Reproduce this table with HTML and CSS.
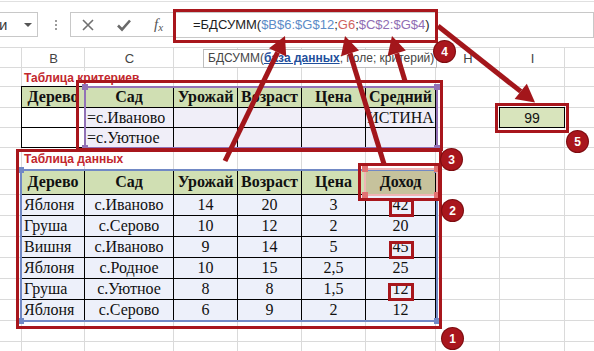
FILE: index.html
```html
<!DOCTYPE html>
<html lang="ru">
<head>
<meta charset="utf-8">
<title>БДСУММ</title>
<link rel="stylesheet" href="styles.css">
</head>
<body>
<div class="page">
  <div class="toolbar">
    <div class="namebox"><span class="nb-text">и</span><span class="caret"></span></div>
    <div class="dots"><i></i><i></i><i></i></div>
    <div class="fnbox">
      <svg class="ic-x" width="14" height="14" viewBox="0 0 14 14"><path d="M2 2L12 12M12 2L2 12" stroke="#707070" stroke-width="1.6" fill="none"/></svg>
      <svg class="ic-ok" width="16" height="14" viewBox="0 0 16 14"><path d="M2 7.5L6 11.5L14 2.5" stroke="#6a6a6a" stroke-width="2.6" fill="none"/></svg>
      <span class="fx">f<span class="fx-sub">x</span></span>
    </div>
    <div class="formula">=БДСУММ(<span class="r-blue">$B$6:$G$12</span>;<span class="r-red">G6</span>;<span class="r-purple">$C$2:$G$4</span>)</div>
  </div>

  <div class="sheet">
    <div class="ch"></div>
    <div class="ch">B</div>
    <div class="ch">C</div>
    <div class="ch"></div>
    <div class="ch"></div>
    <div class="ch"></div>
    <div class="ch"></div>
    <div class="ch">H</div>
    <div class="ch">I</div>
    <div class="ch"></div>

    <div class="lbl lbl-crit"><span>Таблица критериев</span></div>

    <div class="tbl crit">
      <div class="c h">Дерево</div>
      <div class="c h">Сад</div>
      <div class="c h">Урожай</div>
      <div class="c h">Возраст</div>
      <div class="c h">Цена</div>
      <div class="c h">Средний</div>

      <div class="c"></div>
      <div class="c l lav">=с.Иваново</div>
      <div class="c lav"></div>
      <div class="c lav"></div>
      <div class="c lav"></div>
      <div class="c lav">ИСТИНА</div>

      <div class="c"></div>
      <div class="c l lav">=с.Уютное</div>
      <div class="c lav"></div>
      <div class="c lav"></div>
      <div class="c lav"></div>
      <div class="c lav"></div>
    </div>

    <div class="result">99</div>

    <div class="lbl lbl-data"><span>Таблица данных</span></div>

    <div class="tbl data">
      <div class="c h">Дерево</div>
      <div class="c h">Сад</div>
      <div class="c h">Урожай</div>
      <div class="c h">Возраст</div>
      <div class="c h">Цена</div>
      <div class="c h doh">Доход</div>

      <div class="c l blu">Яблоня</div><div class="c blu">с.Иваново</div><div class="c blu">14</div><div class="c blu">20</div><div class="c blu">3</div><div class="c blu">42</div>
      <div class="c l blu">Груша</div><div class="c blu">с.Серово</div><div class="c blu">10</div><div class="c blu">12</div><div class="c blu">2</div><div class="c blu">20</div>
      <div class="c l blu">Вишня</div><div class="c blu">с.Иваново</div><div class="c blu">9</div><div class="c blu">14</div><div class="c blu">5</div><div class="c blu">45</div>
      <div class="c l blu">Яблоня</div><div class="c blu">с.Родное</div><div class="c blu">10</div><div class="c blu">15</div><div class="c blu">2,5</div><div class="c blu">25</div>
      <div class="c l blu">Груша</div><div class="c blu">с.Уютное</div><div class="c blu">8</div><div class="c blu">8</div><div class="c blu">1,5</div><div class="c blu">12</div>
      <div class="c l blu">Яблоня</div><div class="c blu">с.Серово</div><div class="c blu">6</div><div class="c blu">9</div><div class="c blu">2</div><div class="c blu">12</div>
    </div>
  </div>

  <div class="sel sel-p"><i class="tl"></i><i class="tr"></i><i class="bl"></i><i class="br"></i></div>
  <div class="sel sel-b"><i class="tl"></i><i class="tr"></i><i class="bl"></i><i class="br"></i></div>
  <div class="sel sel-r"><i class="tl"></i><i class="tr"></i><i class="bl"></i><i class="br"></i></div>

  <div class="tooltip">БДСУММ(<b>база данных</b>; поле; критерий)</div>

  <div class="redbox rb-formula"></div>
  <div class="redbox rb-crit"></div>
  <div class="redbox rb-data"></div>
  <div class="redbox rb-doh"></div>
  <div class="redbox rb-res"></div>
  <div class="redbox rb-42"></div>
  <div class="redbox rb-45"></div>
  <div class="redbox rb-12"></div>

  <svg class="arrows" width="594" height="351" viewBox="0 0 594 351">
    <g stroke="#a3161b" stroke-width="5" fill="none">
      <line x1="225" y1="161" x2="277.6" y2="52.3"/>
      <line x1="384" y1="164" x2="350" y2="53.3"/>
      <line x1="405" y1="81" x2="396.7" y2="53.4"/>
      <line x1="438" y1="26" x2="520.7" y2="91.4"/>
    </g>
    <g fill="#a3161b">
      <polygon points="285,36 286.2,56.6 269,48.2"/>
      <polygon points="345,36 359,50.4 341,56.2"/>
      <polygon points="392,36 405.8,50.6 387.6,56"/>
      <polygon points="535,102.5 514.6,99 526.8,83.8"/>
    </g>
  </svg>

  <div class="badge b4">4</div>
  <div class="badge b5">5</div>
  <div class="badge b3">3</div>
  <div class="badge b2">2</div>
  <div class="badge b1">1</div>
</div>
</body>
</html>
```

FILE: styles.css
```css
html, body {
  margin: 0;
  padding: 0;
  background: #fff;
}
body {
  width: 594px;
  height: 351px;
  overflow: hidden;
}
.page {
  position: relative;
  width: 594px;
  height: 351px;
  overflow: hidden;
  font-family: "Liberation Sans", Arial, sans-serif;
  color: #222;
}

/* ---------- formula bar ---------- */
.toolbar {
  height: 46px;
  margin-top: 1px;
  box-sizing: border-box;
  border-top: 1px solid #e0e0e0;
  padding-top: 10px;
  display: flex;
  align-items: flex-start;
}
.namebox {
  position: relative;
  width: 38px;
  height: 25px;
  box-sizing: border-box;
  border: 1px solid #c8c8c8;
  border-left: none;
  display: flex;
  align-items: center;
}
.nb-text {
  font-size: 15px;
  color: #3a3a3a;
  margin-left: -1px;
}
.caret {
  position: absolute;
  left: 24px;
  top: 10px;
  border-left: 4px solid transparent;
  border-right: 4px solid transparent;
  border-top: 4px solid #555;
}
.dots {
  width: 3px;
  height: 25px;
  margin-left: 16px;
  display: flex;
  flex-direction: column;
  justify-content: center;
  align-items: center;
  gap: 2px;
}
.dots i {
  display: block;
  width: 2px;
  height: 2px;
  background: #9c9c9c;
}
.fnbox {
  margin-left: 13px;
  width: 105px;
  height: 25px;
  box-sizing: border-box;
  border: 1px solid #c8c8c8;
  display: flex;
  align-items: center;
}
.ic-x { margin-left: 10px; }
.ic-ok { margin-left: 21px; }
.fx {
  margin-left: 22px;
  font-family: "Liberation Serif", serif;
  font-style: italic;
  font-size: 15px;
  color: #555;
  line-height: 1;
}
.fx-sub {
  font-size: 11px;
  position: relative;
  top: 2px;
}
.formula {
  flex: 1;
  height: 26px;
  box-sizing: border-box;
  border: 1px solid #c8c8c8;
  border-left: none;
  padding-left: 18px;
  font-size: 13px;
  line-height: 24px;
  color: #1e1e1e;
  white-space: nowrap;
}
.r-blue { color: #5b8bc7; }
.r-red { color: #d0625e; }
.r-purple { color: #8f6db3; }

/* ---------- sheet ---------- */
.sheet {
  --g: linear-gradient(#dadada, #dadada);
  display: grid;
  grid-template-columns: 22px 63px 89px 64px 64px 64px 70px 64px 65px 29px;
  grid-template-rows: 21px 19px 21px 20px 20px 22px 25px repeat(6, 21px) 21px 21px;
  background:
    var(--g) 21px 0 / 1px 100% no-repeat,
    var(--g) 84px 0 / 1px 100% no-repeat,
    var(--g) 173px 0 / 1px 100% no-repeat,
    var(--g) 237px 0 / 1px 100% no-repeat,
    var(--g) 301px 0 / 1px 100% no-repeat,
    var(--g) 365px 0 / 1px 100% no-repeat,
    var(--g) 435px 0 / 1px 100% no-repeat,
    var(--g) 499px 0 / 1px 100% no-repeat,
    var(--g) 564px 0 / 1px 100% no-repeat,
    var(--g) 0 0 / 100% 1px no-repeat,
    var(--g) 0 20px / 100% 1px no-repeat,
    var(--g) 0 39px / 100% 1px no-repeat,
    var(--g) 0 60px / 100% 1px no-repeat,
    var(--g) 0 80px / 100% 1px no-repeat,
    var(--g) 0 100px / 100% 1px no-repeat,
    var(--g) 0 122px / 100% 1px no-repeat,
    var(--g) 0 147px / 100% 1px no-repeat,
    var(--g) 0 168px / 100% 1px no-repeat,
    var(--g) 0 189px / 100% 1px no-repeat,
    var(--g) 0 210px / 100% 1px no-repeat,
    var(--g) 0 231px / 100% 1px no-repeat,
    var(--g) 0 252px / 100% 1px no-repeat,
    var(--g) 0 273px / 100% 1px no-repeat,
    var(--g) 0 294px / 100% 1px no-repeat,
    #fff;
}
.ch {
  grid-row: 1;
  display: flex;
  align-items: center;
  justify-content: center;
  font-size: 13px;
  color: #444;
  padding-top: 1px;
}
.lbl {
  grid-column: 2 / 4;
  display: flex;
  align-items: center;
}
.lbl span {
  background: #fff;
  padding: 0 2px;
  font-weight: bold;
  font-size: 12px;
  color: #c2272d;
  white-space: nowrap;
}
.lbl-crit { grid-row: 2; }
.lbl-data { grid-row: 6; }

.tbl {
  grid-column: 2 / 8;
  margin: -1px 0 0 -1px;
  display: grid;
  grid-template-columns: 63px 89px 64px 64px 64px 70px;
  border-left: 1px solid #000;
  border-top: 1px solid #000;
  background: #fff;
}
.crit {
  grid-row: 3 / 6;
  grid-template-rows: 21px 20px 20px;
}
.data {
  grid-row: 7 / 14;
  grid-template-rows: 25px repeat(6, 21px);
}
.c {
  box-sizing: border-box;
  border-right: 1px solid #000;
  border-bottom: 1px solid #000;
  display: flex;
  align-items: center;
  justify-content: center;
  font-family: "Liberation Serif", "Times New Roman", serif;
  font-size: 16px;
  color: #111;
  white-space: nowrap;
  background: #fff;
}
.c.h {
  font-weight: bold;
  background: #d0dfb3;
}
.c.h.doh { background: #c6c29c; }
.c.l {
  justify-content: flex-start;
  padding-left: 2px;
}
.c.lav { background: #f0eef8; }
.c.blu { background: #edf0fa; }

.result {
  grid-column: 9;
  grid-row: 4;
  margin: -1px 0 0 -1px;
  border: 1px solid #000;
  background: #d8e4bc;
  display: flex;
  align-items: center;
  justify-content: center;
  font-size: 14px;
  color: #111;
}

/* ---------- overlays ---------- */
.sel {
  position: absolute;
  box-sizing: border-box;
  border: 2px solid;
}
.sel i {
  position: absolute;
  width: 6px;
  height: 6px;
}
.sel .tl { left: -4px; top: -4px; }
.sel .tr { right: -4px; top: -4px; }
.sel .bl { left: -4px; bottom: -4px; }
.sel .br { right: -4px; bottom: -4px; }
.sel-p {
  left: 84px; top: 86px; width: 354px; height: 63px;
  border-color: #9272b6;
}
.sel-p i { background: #9272b6; }
.sel-b {
  left: 20px; top: 169px; width: 418px; height: 153px;
  border-color: #7189c5;
}
.sel-b i { background: #7189c5; }
.sel-r {
  left: 364px; top: 168px; width: 74px; height: 28px;
  border-color: #f0b4b4;
}
.sel-r i { background: #e27272; }

.tooltip {
  position: absolute;
  left: 203px;
  top: 49px;
  width: 234px;
  height: 19px;
  box-sizing: border-box;
  background: #fff;
  border: 1px solid #bdbdbd;
  padding-left: 4px;
  font-size: 12px;
  line-height: 17px;
  color: #454545;
  white-space: nowrap;
  overflow: hidden;
}
.tooltip b {
  color: #1f4f9c;
  text-decoration: underline;
}

.redbox {
  position: absolute;
  box-sizing: border-box;
  border: 3px solid #a8161c;
}
.rb-formula { left: 173px; top: 9px; width: 265px; height: 34px; }
.rb-crit { left: 76px; top: 80px; width: 367px; height: 71px; }
.rb-data { left: 16px; top: 149px; width: 426px; height: 180px; }
.rb-doh { left: 358px; top: 163px; width: 83px; height: 38px; }
.rb-res { left: 495px; top: 103px; width: 74px; height: 30px; }
.rb-42 { left: 389px; top: 199px; width: 25px; height: 18px; }
.rb-45 { left: 389px; top: 241px; width: 25px; height: 18px; }
.rb-12 { left: 388px; top: 283px; width: 26px; height: 18px; }

.arrows {
  position: absolute;
  left: 0;
  top: 0;
}

.badge {
  position: absolute;
  width: 21px;
  height: 21px;
  border-radius: 50%;
  background: #a9161d;
  box-shadow: 0 0 0 1px #7d0c10;
  color: #fff;
  font-weight: bold;
  font-size: 12px;
  display: flex;
  align-items: center;
  justify-content: center;
}
.b4 { left: 434px; top: 41px; }
.b5 { left: 567px; top: 131px; }
.b3 { left: 441px; top: 149px; }
.b2 { left: 442px; top: 200px; }
.b1 { left: 442px; top: 328px; }
```
